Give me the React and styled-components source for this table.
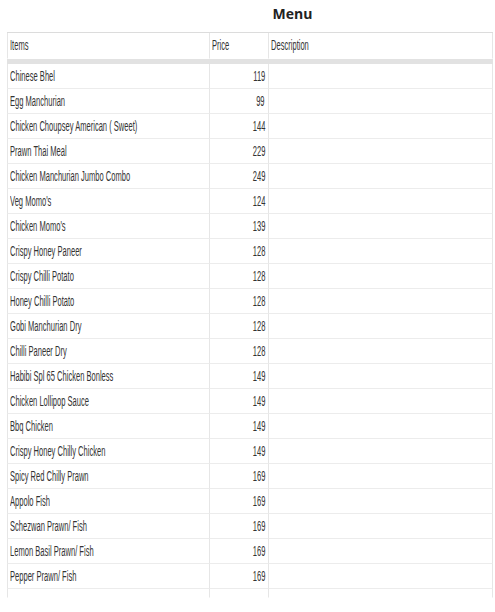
import React from "react";
import styled, { createGlobalStyle } from "styled-components";

const GlobalStyle = createGlobalStyle`
  body {
    margin: 0;
    background: #ffffff;
    font-family: "Liberation Sans", Arial, sans-serif;
  }
`;

const items = [
  ["Chinese Bhel", 119],
  ["Egg Manchurian", 99],
  ["Chicken Choupsey American ( Sweet)", 144],
  ["Prawn Thai Meal", 229],
  ["Chicken Manchurian Jumbo Combo", 249],
  ["Veg Momo's", 124],
  ["Chicken Momo's", 139],
  ["Crispy Honey Paneer", 128],
  ["Crispy Chilli Potato", 128],
  ["Honey Chilli Potato", 128],
  ["Gobi Manchurian Dry", 128],
  ["Chilli Paneer Dry", 128],
  ["Habibi Spl 65 Chicken Bonless", 149],
  ["Chicken Lollipop Sauce", 149],
  ["Bbq Chicken", 149],
  ["Crispy Honey Chilly Chicken", 149],
  ["Spicy Red Chilly Prawn", 169],
  ["Appolo Fish", 169],
  ["Schezwan Prawn/ Fish", 169],
  ["Lemon Basil Prawn/ Fish", 169],
  ["Pepper Prawn/ Fish", 169],
];

const Page = styled.div`
  width: 495px;
  height: 612px;
  overflow: hidden;
`;

const Title = styled.h1`
  margin: 0;
  height: 26px;
  padding-left: 90px;
  display: flex;
  align-items: center;
  justify-content: center;
  font-family: "Open Sans", sans-serif;
  font-size: 14px;
  font-weight: 700;
  color: #222;
`;

const Table = styled.div`
  margin: 6px 0 0 7px;
  width: 486px;
  border-top: 1px solid #dcdcdc;
  display: grid;
  grid-template-columns: 202px 59px 1fr;
`;

const Cell = styled.div`
  height: ${(p) => (p.$short ? 8 : p.$head ? 25 : 24)}px;
  border-bottom: 1px solid ${(p) => (p.$last ? "transparent" : "#ececec")};
  border-left: 1px solid #e6e6e6;
  border-right: ${(p) => (p.$end ? "1px solid #e6e6e6" : "none")};
  display: flex;
  align-items: center;
  justify-content: ${(p) => (p.$num ? "flex-end" : "flex-start")};
  padding: ${(p) => (p.$num ? "0 3px 0 0" : "0 0 0 2px")};
  overflow: hidden;
  white-space: nowrap;
`;

const Band = styled.div`
  grid-column: 1 / -1;
  height: 5px;
  background: #e2e2e2;
`;

const Text = styled.span`
  display: inline-block;
  margin-top: -1px;
  font-family: "Liberation Sans Narrow", "Liberation Sans", sans-serif;
  font-size: 14px;
  color: #333;
  transform: scaleX(0.54);
  transform-origin: ${(p) => (p.$num ? "right" : "left")} center;
`;

const Row = ({ name, price }) => (
  <>
    <Cell>
      <Text>{name}</Text>
    </Cell>
    <Cell $num>
      <Text $num>{price}</Text>
    </Cell>
    <Cell $end />
  </>
);

export default function App() {
  return (
    <Page>
      <GlobalStyle />
      <Title>Menu</Title>
      <Table>
        <Cell $head $last>
          <Text>Items</Text>
        </Cell>
        <Cell $head $last>
          <Text>Price</Text>
        </Cell>
        <Cell $head $last $end>
          <Text>Description</Text>
        </Cell>
        <Band />
        {items.map(([name, price]) => (
          <Row key={name} name={name} price={price} />
        ))}
        <Cell $short $last />
        <Cell $short $last />
        <Cell $short $last $end />
      </Table>
    </Page>
  );
}
